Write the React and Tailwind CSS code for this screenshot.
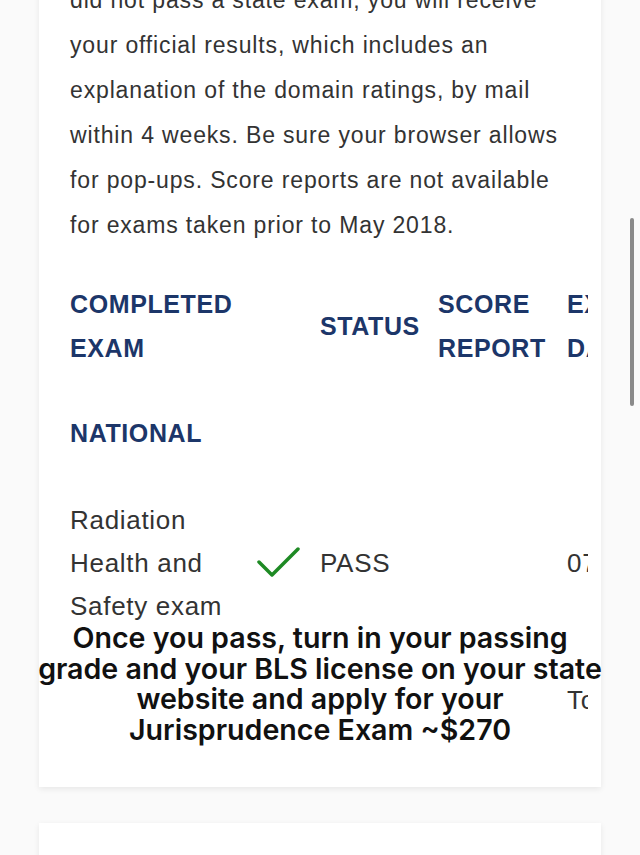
import React from 'react';

const font = { fontFamily: '"Liberation Sans", Arial, sans-serif' };

const Check = () => (
  <svg width="44" height="32" viewBox="0 0 44 32" fill="none">
    <path d="M2 15 L15 28 L41 2" stroke="#1e8a24" strokeWidth="3.5" strokeLinecap="round" strokeLinejoin="round" />
  </svg>
);

const lines = [
  'did not pass a state exam, you will receive',
  'your official results, which includes an',
  'explanation of the domain ratings, by mail',
  'within 4 weeks. Be sure your browser allows',
  'for pop-ups. Score reports are not available',
  'for exams taken prior to May 2018.',
];

const App = () => {
  return (
    <div className="relative h-[855px] w-[640px] overflow-hidden bg-[#fafafa]" style={font}>
      {/* Results card */}
      <div className="ml-[39px] w-[562px] -mt-[22px] bg-white shadow-[0_2px_6px_rgba(0,0,0,0.08)] pb-[65px]">
        <p className="pl-[31px] pr-[10px] text-[23px] leading-[45px] tracking-[0.85px] text-[#333] whitespace-nowrap">
          {lines.map((l, i) => (
            <span key={i} className="block">{l}</span>
          ))}
        </p>

        <div className="mt-[34px] ml-[31px] w-[518px] overflow-hidden">
          <div className="w-[640px]">
            {/* header */}
            <div className="grid grid-cols-[250px_118px_129px_143px] items-center text-[25px] leading-[44px] tracking-[0.6px] font-bold text-[#1c3669] uppercase">
              <div>Completed<br />Exam</div>
              <div>Status</div>
              <div>Score<br />Report</div>
              <div>Exam<br />Date</div>
            </div>

            <div className="mt-[41px] text-[25px] leading-[44px] tracking-[0.6px] font-bold text-[#1c3669]">NATIONAL</div>

            {/* row */}
            <div className="mt-[44px] grid grid-cols-[187px_63px_247px_143px] items-center text-[26px] leading-[43px] tracking-[0.7px] text-[#333]">
              <div className="whitespace-nowrap">Radiation<br />Health and<br />Safety exam</div>
              <div className="flex justify-start pb-[2px]"><Check /></div>
              <div>PASS</div>
              <div>07/2023</div>
            </div>

            <div className="mt-[51px] grid grid-cols-[497px_143px] text-[26px] leading-[43px] tracking-[0.7px] text-[#333]">
              <div></div>
              <div>Total</div>
            </div>
          </div>
        </div>
      </div>

      {/* next card */}
      <div className="ml-[39px] mt-[36px] w-[562px] h-[200px] bg-white shadow-[0_2px_6px_rgba(0,0,0,0.08)]"></div>

      {/* caption overlay */}
      <div className="absolute left-0 top-[623px] w-[640px] text-center text-[28.6px] leading-[30.5px] font-semibold text-[#111] whitespace-nowrap" style={{ fontFamily: 'Inter, "Liberation Sans", sans-serif' }}>
        Once you pass, turn in your passing<br />
        grade and your BLS license on your state<br />
        website and apply for your<br />
        Jurisprudence Exam ~$270
      </div>

      {/* scrollbar */}
      <div className="absolute left-[630px] top-[218px] h-[188px] w-[4px] rounded-full bg-[#8a8a8a]"></div>
    </div>
  );
};

export default App;
